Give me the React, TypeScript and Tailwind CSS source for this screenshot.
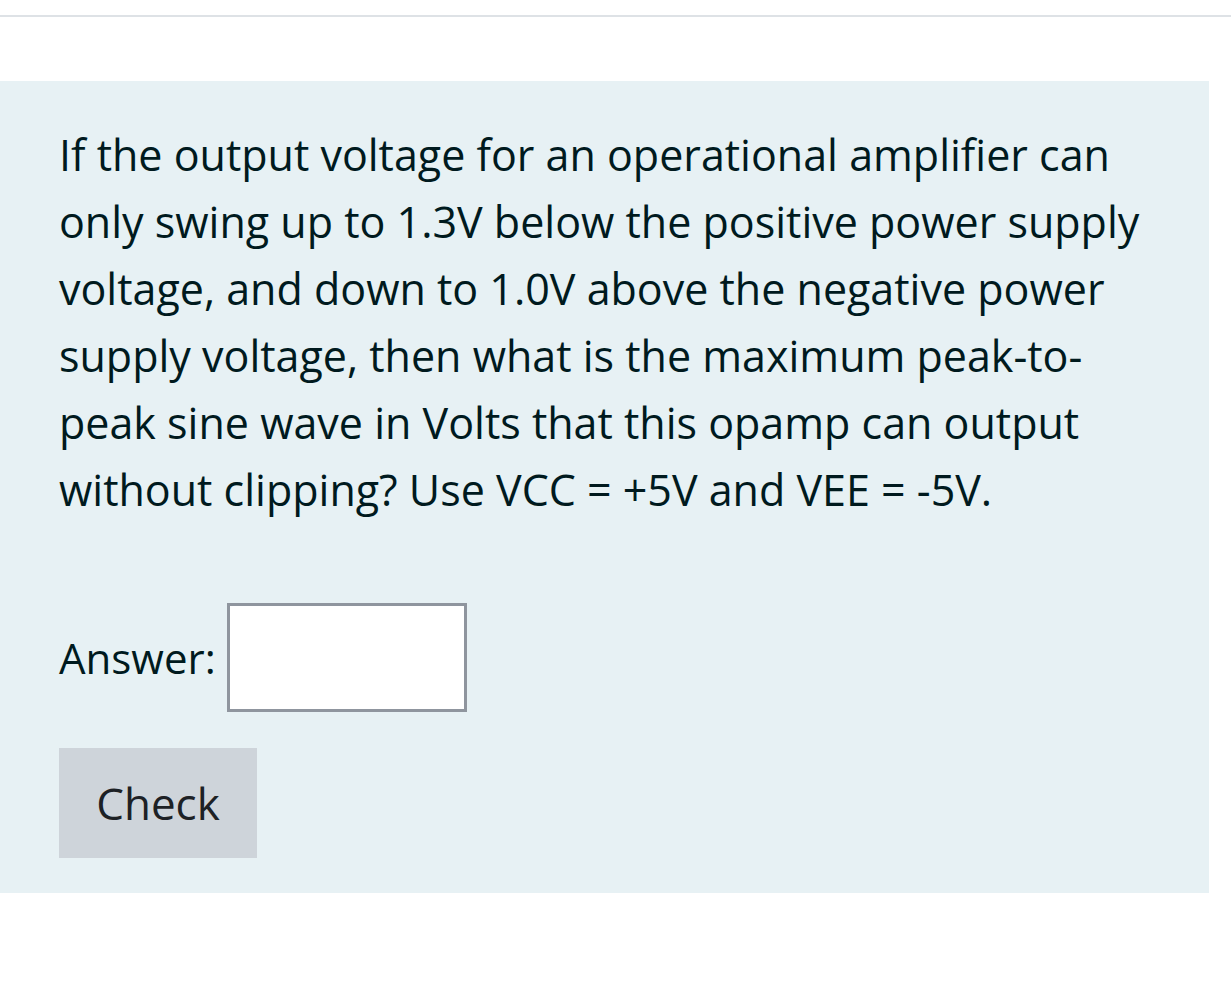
const lines = [
  'If the output voltage for an operational amplifier can',
  'only swing up to 1.3V below the positive power supply',
  'voltage, and down to 1.0V above the negative power',
  'supply voltage, then what is the maximum peak-to-',
  'peak sine wave in Volts that this opamp can output',
  'without clipping? Use VCC = +5V and VEE = -5V.',
];

export default function App() {
  return (
    <div className="min-h-[997px] w-[1231px] bg-white pt-[15px] font-['Open_Sans',sans-serif]">
      <div className="h-[2px] bg-[#dee2e6]" />

      {/* Question box */}
      <div className="mt-[64px] w-[1209px] bg-[#e7f1f4] pl-[59px] pr-[20px] pt-[40px] pb-[35px] text-[#001a1e]">
        <div className="text-[43px] leading-[67px]">
          {lines.map((line, i) => (
            <div key={i} className="whitespace-nowrap">
              {line}
            </div>
          ))}
        </div>

        <div className="mt-[80px] flex items-center gap-[11px]">
          <label className="text-[42px] leading-[67px]">Answer:</label>
          <input
            type="text"
            className="h-[109px] w-[240px] border-[3px] border-[#8f959e] bg-white outline-none"
          />
        </div>

        <button className="mt-[36px] flex h-[110px] w-[198px] items-center justify-center bg-[#ced4da] text-[44px] text-[#1d2125]">
          Check
        </button>
      </div>
    </div>
  );
}
